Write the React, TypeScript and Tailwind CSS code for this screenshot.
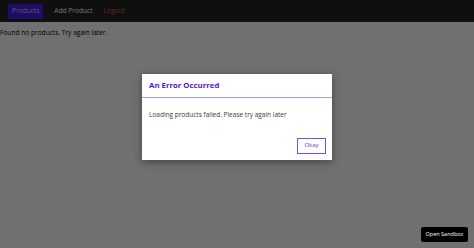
export default function App() {
  return (
    <div className="relative h-[248px] w-[474px] overflow-hidden bg-white font-['Open_Sans',sans-serif]">
      <nav className="flex h-[22px] items-center gap-[11px] bg-[#222] pl-[8px] text-[6.6px]">
        <span className="bg-[#4a1ce6] px-[4px] py-[3.5px] leading-[8px] text-[#cfc6ff]">Products</span>
        <span className="text-white">Add Product</span>
        <span className="text-[#e05555]">Logout</span>
      </nav>
      <p className="mt-[6px] text-[6.6px] text-black">Found no products. Try again later.</p>

      <div className="absolute inset-0 bg-black/56" />

      <div className="absolute left-[142px] top-[74px] w-[190px] bg-white shadow-[0_2px_8px_rgba(0,0,0,0.4)]">
        <header className="flex h-[24px] items-center border-b-[1.5px] border-[#b49be8] px-[7px]">
          <h2 className="text-[7.8px] font-bold text-[#5a12d6]">An Error Occurred</h2>
        </header>
        <div className="px-[7px] pt-[12px] text-[6.5px] text-[#3a3a3a]">
          Loading products failed. Please try again later
        </div>
        <footer className="flex justify-end px-[6px] pb-[6px] pt-[18px]">
          <button className="h-[16px] w-[29px] border border-[#7a4fe0] text-[6px] text-[#6a40d0]">Okay</button>
        </footer>
      </div>

      <button className="absolute left-[421px] top-[227px] h-[15px] w-[47px] rounded-[2px] bg-black text-[5.5px] text-white">
        Open Sandbox
      </button>
    </div>
  );
}
